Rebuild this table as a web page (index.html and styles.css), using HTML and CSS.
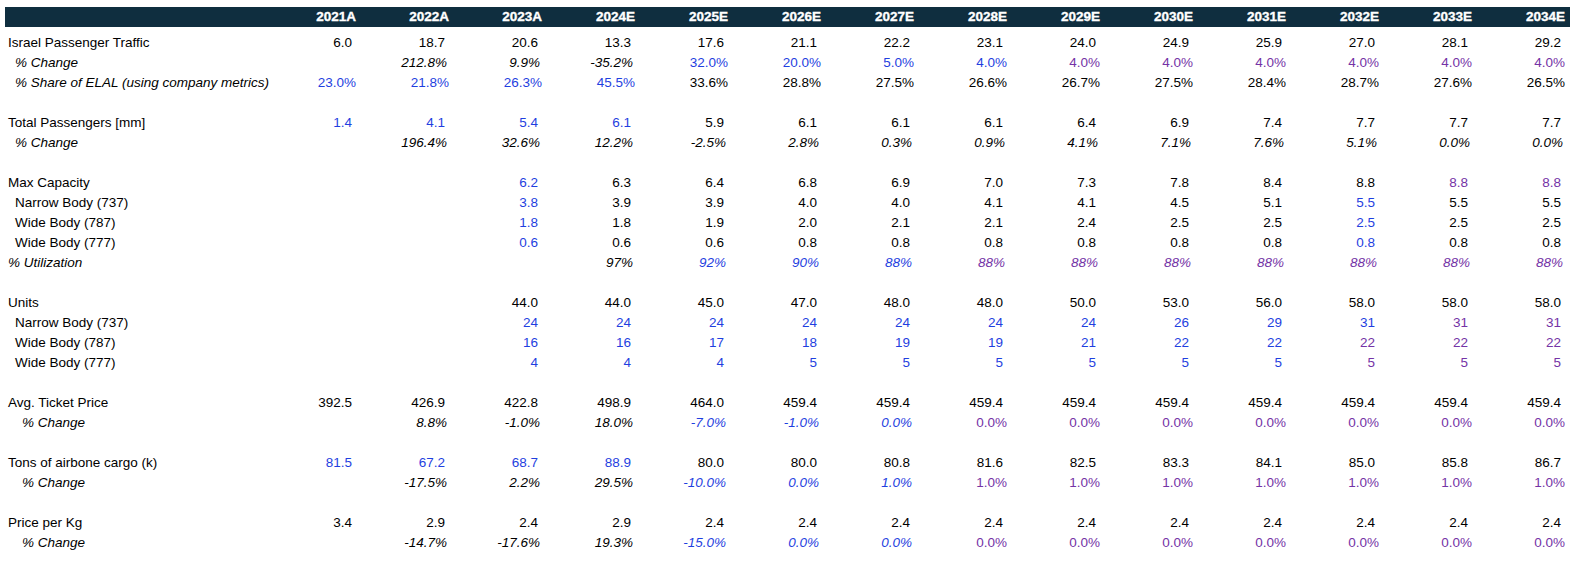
FILE: index.html
```html
<!DOCTYPE html>
<html lang="en">
<head>
<meta charset="utf-8">
<title>ELAL Model</title>
<link rel="stylesheet" href="styles.css">
</head>
<body>
<table class="sheet">
<colgroup>
<col class="c-label">
<col class="c-yr"><col class="c-yr"><col class="c-yr"><col class="c-yr"><col class="c-yr"><col class="c-yr"><col class="c-yr">
<col class="c-yr"><col class="c-yr"><col class="c-yr"><col class="c-yr"><col class="c-yr"><col class="c-yr"><col class="c-yr">
</colgroup>
<thead>
<tr class="head">
<th></th><th>2021A</th><th>2022A</th><th>2023A</th><th>2024E</th><th>2025E</th><th>2026E</th><th>2027E</th><th>2028E</th><th>2029E</th><th>2030E</th><th>2031E</th><th>2032E</th><th>2033E</th><th>2034E</th>
</tr>
</thead>
<tbody>
<tr class="gap"><td colspan="15"></td></tr>
<tr><td class="lab">Israel Passenger Traffic</td><td class="n">6.0</td><td class="n">18.7</td><td class="n">20.6</td><td class="n">13.3</td><td class="n">17.6</td><td class="n">21.1</td><td class="n">22.2</td><td class="n">23.1</td><td class="n">24.0</td><td class="n">24.9</td><td class="n">25.9</td><td class="n">27.0</td><td class="n">28.1</td><td class="n">29.2</td></tr>
<tr><td class="lab ind1 it">% Change</td><td></td><td class="pi">212.8%</td><td class="pi">9.9%</td><td class="pi">-35.2%</td><td class="pc b">32.0%</td><td class="pc b">20.0%</td><td class="pc b">5.0%</td><td class="pc b">4.0%</td><td class="pc p">4.0%</td><td class="pc p">4.0%</td><td class="pc p">4.0%</td><td class="pc p">4.0%</td><td class="pc p">4.0%</td><td class="pc p">4.0%</td></tr>
<tr><td class="lab ind1 it">% Share of ELAL (using company metrics)</td><td class="pc b">23.0%</td><td class="pc b">21.8%</td><td class="pc b">26.3%</td><td class="pc b">45.5%</td><td class="pc">33.6%</td><td class="pc">28.8%</td><td class="pc">27.5%</td><td class="pc">26.6%</td><td class="pc">26.7%</td><td class="pc">27.5%</td><td class="pc">28.4%</td><td class="pc">28.7%</td><td class="pc">27.6%</td><td class="pc">26.5%</td></tr>
<tr class="blank"><td colspan="15"></td></tr>
<tr><td class="lab">Total Passengers [mm]</td><td class="n b">1.4</td><td class="n b">4.1</td><td class="n b">5.4</td><td class="n b">6.1</td><td class="n">5.9</td><td class="n">6.1</td><td class="n">6.1</td><td class="n">6.1</td><td class="n">6.4</td><td class="n">6.9</td><td class="n">7.4</td><td class="n">7.7</td><td class="n">7.7</td><td class="n">7.7</td></tr>
<tr><td class="lab ind1 it">% Change</td><td></td><td class="pi">196.4%</td><td class="pi">32.6%</td><td class="pi">12.2%</td><td class="pi">-2.5%</td><td class="pi">2.8%</td><td class="pi">0.3%</td><td class="pi">0.9%</td><td class="pi">4.1%</td><td class="pi">7.1%</td><td class="pi">7.6%</td><td class="pi">5.1%</td><td class="pi">0.0%</td><td class="pi">0.0%</td></tr>
<tr class="blank"><td colspan="15"></td></tr>
<tr><td class="lab">Max Capacity</td><td></td><td></td><td class="n b">6.2</td><td class="n">6.3</td><td class="n">6.4</td><td class="n">6.8</td><td class="n">6.9</td><td class="n">7.0</td><td class="n">7.3</td><td class="n">7.8</td><td class="n">8.4</td><td class="n">8.8</td><td class="n p">8.8</td><td class="n p">8.8</td></tr>
<tr><td class="lab ind1">Narrow Body (737)</td><td></td><td></td><td class="n b">3.8</td><td class="n">3.9</td><td class="n">3.9</td><td class="n">4.0</td><td class="n">4.0</td><td class="n">4.1</td><td class="n">4.1</td><td class="n">4.5</td><td class="n">5.1</td><td class="n b">5.5</td><td class="n">5.5</td><td class="n">5.5</td></tr>
<tr><td class="lab ind1">Wide Body (787)</td><td></td><td></td><td class="n b">1.8</td><td class="n">1.8</td><td class="n">1.9</td><td class="n">2.0</td><td class="n">2.1</td><td class="n">2.1</td><td class="n">2.4</td><td class="n">2.5</td><td class="n">2.5</td><td class="n b">2.5</td><td class="n">2.5</td><td class="n">2.5</td></tr>
<tr><td class="lab ind1">Wide Body (777)</td><td></td><td></td><td class="n b">0.6</td><td class="n">0.6</td><td class="n">0.6</td><td class="n">0.8</td><td class="n">0.8</td><td class="n">0.8</td><td class="n">0.8</td><td class="n">0.8</td><td class="n">0.8</td><td class="n b">0.8</td><td class="n">0.8</td><td class="n">0.8</td></tr>
<tr><td class="lab it">% Utilization</td><td></td><td></td><td></td><td class="pi">97%</td><td class="pi b">92%</td><td class="pi b">90%</td><td class="pi b">88%</td><td class="pi p">88%</td><td class="pi p">88%</td><td class="pi p">88%</td><td class="pi p">88%</td><td class="pi p">88%</td><td class="pi p">88%</td><td class="pi p">88%</td></tr>
<tr class="blank"><td colspan="15"></td></tr>
<tr><td class="lab">Units</td><td></td><td></td><td class="n">44.0</td><td class="n">44.0</td><td class="n">45.0</td><td class="n">47.0</td><td class="n">48.0</td><td class="n">48.0</td><td class="n">50.0</td><td class="n">53.0</td><td class="n">56.0</td><td class="n">58.0</td><td class="n">58.0</td><td class="n">58.0</td></tr>
<tr><td class="lab ind1">Narrow Body (737)</td><td></td><td></td><td class="n b">24</td><td class="n b">24</td><td class="n b">24</td><td class="n b">24</td><td class="n b">24</td><td class="n b">24</td><td class="n b">24</td><td class="n b">26</td><td class="n b">29</td><td class="n b">31</td><td class="n p">31</td><td class="n p">31</td></tr>
<tr><td class="lab ind1">Wide Body (787)</td><td></td><td></td><td class="n b">16</td><td class="n b">16</td><td class="n b">17</td><td class="n b">18</td><td class="n b">19</td><td class="n b">19</td><td class="n b">21</td><td class="n b">22</td><td class="n b">22</td><td class="n p">22</td><td class="n p">22</td><td class="n p">22</td></tr>
<tr><td class="lab ind1">Wide Body (777)</td><td></td><td></td><td class="n b">4</td><td class="n b">4</td><td class="n b">4</td><td class="n b">5</td><td class="n b">5</td><td class="n b">5</td><td class="n b">5</td><td class="n b">5</td><td class="n b">5</td><td class="n p">5</td><td class="n p">5</td><td class="n p">5</td></tr>
<tr class="blank"><td colspan="15"></td></tr>
<tr><td class="lab">Avg. Ticket Price</td><td class="n">392.5</td><td class="n">426.9</td><td class="n">422.8</td><td class="n">498.9</td><td class="n">464.0</td><td class="n">459.4</td><td class="n">459.4</td><td class="n">459.4</td><td class="n">459.4</td><td class="n">459.4</td><td class="n">459.4</td><td class="n">459.4</td><td class="n">459.4</td><td class="n">459.4</td></tr>
<tr><td class="lab ind2 it">% Change</td><td></td><td class="pi">8.8%</td><td class="pi">-1.0%</td><td class="pi">18.0%</td><td class="pi b">-7.0%</td><td class="pi b">-1.0%</td><td class="pi b">0.0%</td><td class="pc p">0.0%</td><td class="pc p">0.0%</td><td class="pc p">0.0%</td><td class="pc p">0.0%</td><td class="pc p">0.0%</td><td class="pc p">0.0%</td><td class="pc p">0.0%</td></tr>
<tr class="blank"><td colspan="15"></td></tr>
<tr><td class="lab">Tons of airbone cargo (k)</td><td class="n b">81.5</td><td class="n b">67.2</td><td class="n b">68.7</td><td class="n b">88.9</td><td class="n">80.0</td><td class="n">80.0</td><td class="n">80.8</td><td class="n">81.6</td><td class="n">82.5</td><td class="n">83.3</td><td class="n">84.1</td><td class="n">85.0</td><td class="n">85.8</td><td class="n">86.7</td></tr>
<tr><td class="lab ind2 it">% Change</td><td></td><td class="pi">-17.5%</td><td class="pi">2.2%</td><td class="pi">29.5%</td><td class="pi b">-10.0%</td><td class="pi b">0.0%</td><td class="pi b">1.0%</td><td class="pc p">1.0%</td><td class="pc p">1.0%</td><td class="pc p">1.0%</td><td class="pc p">1.0%</td><td class="pc p">1.0%</td><td class="pc p">1.0%</td><td class="pc p">1.0%</td></tr>
<tr class="blank"><td colspan="15"></td></tr>
<tr><td class="lab">Price per Kg</td><td class="n">3.4</td><td class="n">2.9</td><td class="n">2.4</td><td class="n">2.9</td><td class="n">2.4</td><td class="n">2.4</td><td class="n">2.4</td><td class="n">2.4</td><td class="n">2.4</td><td class="n">2.4</td><td class="n">2.4</td><td class="n">2.4</td><td class="n">2.4</td><td class="n">2.4</td></tr>
<tr><td class="lab ind2 it">% Change</td><td></td><td class="pi">-14.7%</td><td class="pi">-17.6%</td><td class="pi">19.3%</td><td class="pi b">-15.0%</td><td class="pi b">0.0%</td><td class="pi b">0.0%</td><td class="pc p">0.0%</td><td class="pc p">0.0%</td><td class="pc p">0.0%</td><td class="pc p">0.0%</td><td class="pc p">0.0%</td><td class="pc p">0.0%</td><td class="pc p">0.0%</td></tr>
</tbody>
</table>
</body>
</html>
```

FILE: styles.css
```css
html, body {
  background: #ffffff;
}
body {
  margin: 7px 0 0 5px;
  font-family: "Liberation Sans", Arial, sans-serif;
  font-size: 13.5px;
  color: #000000;
}
.sheet {
  border-collapse: collapse;
  table-layout: fixed;
  width: 1565px;
}
.c-label { width: 263px; }
.c-yr { width: 93px; }

.sheet th,
.sheet td {
  padding: 0;
  height: 20px;
  line-height: 20px;
  white-space: nowrap;
  vertical-align: middle;
  overflow: visible;
}
.sheet .head th {
  background: #0f2e3f;
  color: #ffffff;
  font-weight: 700;
  font-size: 13.5px;
  text-align: right;
  padding-right: 5px;
  -webkit-text-stroke: 0.35px #ffffff;
}
.sheet tr.gap td {
  height: 6px;
  line-height: 6px;
}
.sheet td.lab {
  text-align: left;
  padding-left: 3px;
}
.sheet td.ind1 { padding-left: 10px; }
.sheet td.ind2 { padding-left: 17px; }
.sheet td.it { font-style: italic; }

.sheet td.n {
  text-align: right;
  padding-right: 9px;
}
.sheet td.pc {
  text-align: right;
  padding-right: 5px;
}
.sheet td.pi {
  text-align: right;
  padding-right: 7px;
  font-style: italic;
}
.sheet td.b { color: #1f3fe0; }
.sheet td.p { color: #7433a6; }
```
